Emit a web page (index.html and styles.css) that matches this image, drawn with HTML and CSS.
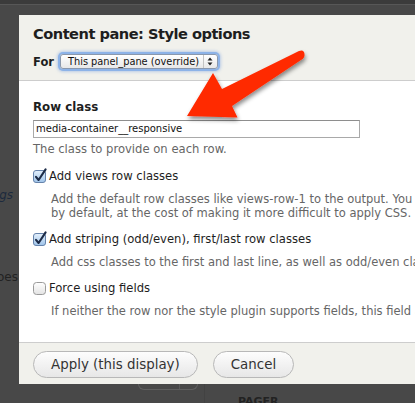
FILE: index.html
```html
<!DOCTYPE html>
<html lang="en">
<head>
<meta charset="utf-8">
<title>Content pane: Style options</title>
<link rel="stylesheet" href="styles.css">
</head>
<body>
<svg class="defs" width="0" height="0" aria-hidden="true">
  <defs>
    <linearGradient id="cbOn" x1="0" y1="0" x2="0" y2="1">
      <stop offset="0" stop-color="#e4f0fc"/>
      <stop offset="1" stop-color="#9fc4ea"/>
    </linearGradient>
    <linearGradient id="cbOff" x1="0" y1="0" x2="0" y2="1">
      <stop offset="0" stop-color="#ffffff"/>
      <stop offset="1" stop-color="#e3e3e3"/>
    </linearGradient>
    <filter id="arrowShadow" x="-20%" y="-20%" width="150%" height="160%">
      <feDropShadow dx="1" dy="3" stdDeviation="2" flood-color="#000" flood-opacity="0.45"/>
    </filter>
  </defs>
</svg>

<div class="page">
  <div class="topbar"></div>
  <div class="page-main">
    <div class="side">
      <div class="side-link">Settings</div>
      <div class="side-text">Does</div>
    </div>
    <div class="page-bottom">
      <div class="btn-group"><span class="btn-group-part"></span></div>
      <div class="col-line"></div>
      <div class="pager">PAGER</div>
    </div>
  </div>
</div>

<div class="dialog">
  <div class="dlg-head">
    <h1 class="title">Content pane: Style options</h1>
    <div class="for-row">
      <span class="for-label">For</span>
      <div class="select">
        <span class="select-text">This panel_pane (override)</span>
        <span class="select-arrows">
          <svg width="6" height="9" viewBox="0 0 6 9"><path d="M0.5 3.6 L3 0.6 L5.5 3.6 Z M0.5 5.4 L3 8.4 L5.5 5.4 Z" fill="#222"/></svg>
        </span>
      </div>
    </div>
  </div>

  <div class="dlg-body">
    <div class="field-label">Row class</div>
    <div class="text-input">media-container__responsive</div>
    <div class="help">The class to provide on each row.</div>

    <div class="cb-row">
      <svg class="cb" width="13" height="13" viewBox="0 0 13 13"><rect x="0.5" y="0.5" width="12" height="12" rx="2.5" fill="url(#cbOn)" stroke="#6683ab"/><path d="M3 6.8 L5.6 10 L12.6 -0.6" fill="none" stroke="#1c2b47" stroke-width="2.1" stroke-linecap="round" stroke-linejoin="round"/></svg>
      <span class="cb-label">Add views row classes</span>
    </div>
    <div class="desc">Add the default row classes like views-row-1 to the output. You can use this to quickly reduce the amount of markup the view provides<br>by default, at the cost of making it more difficult to apply CSS.</div>

    <div class="cb-row">
      <svg class="cb" width="13" height="13" viewBox="0 0 13 13"><rect x="0.5" y="0.5" width="12" height="12" rx="2.5" fill="url(#cbOn)" stroke="#6683ab"/><path d="M3 6.8 L5.6 10 L12.6 -0.6" fill="none" stroke="#1c2b47" stroke-width="2.1" stroke-linecap="round" stroke-linejoin="round"/></svg>
      <span class="cb-label">Add striping (odd/even), first/last row classes</span>
    </div>
    <div class="desc">Add css classes to the first and last line, as well as odd/even classes for striping.</div>

    <div class="cb-row">
      <svg class="cb" width="13" height="13" viewBox="0 0 13 13"><rect x="0.5" y="0.5" width="12" height="12" rx="3" fill="url(#cbOff)" stroke="#9a9a9a"/></svg>
      <span class="cb-label">Force using fields</span>
    </div>
    <div class="desc">If neither the row nor the style plugin supports fields, this field allows to enable them, so you can for example use groupby.</div>
  </div>

  <div class="dlg-foot">
    <button class="btn" type="button">Apply (this display)</button>
    <button class="btn" type="button">Cancel</button>
  </div>
</div>

<svg class="annot-arrow" width="415" height="403" viewBox="0 0 415 403" aria-hidden="true">
  <path d="M187 116 L213 73 L222 89 L299 51 Q304 49 304.5 54 Q305 58 301 60 L232 106 L237.5 117.5 Z" fill="#ff2a00" filter="url(#arrowShadow)"/>
</svg>
</body>
</html>
```

FILE: styles.css
```css
html, body {
  margin: 0;
  padding: 0;
  width: 415px;
  height: 403px;
  overflow: hidden;
}

body {
  position: relative;
  background: #484848;
  font-family: "DejaVu Sans", "Liberation Sans", sans-serif;
  color: #222;
}

.defs {
  position: absolute;
  width: 0;
  height: 0;
}

/* ---------- dimmed page underneath ---------- */
.page {
  display: flex;
  flex-direction: column;
  width: 415px;
  height: 403px;
}

.topbar {
  height: 4px;
  background: #3b3b3b;
  border-bottom: 1px solid #575757;
}

.page-main {
  flex: 1;
  display: flex;
  flex-direction: column;
  background: #484848;
}

.side {
  width: 19px;
  height: 379px;
  overflow: hidden;
}

.side-link,
.side-text {
  display: flex;
  justify-content: flex-end;
  white-space: nowrap;
  font-size: 12px;
  line-height: 15px;
}

.side-link {
  margin-top: 183px;
  padding-right: 6px;
  font-style: italic;
  color: #1c2a3d;
}

.side-text {
  margin-top: 67px;
  padding-right: 1px;
  color: #222;
}

.page-bottom {
  display: flex;
  align-items: flex-start;
  height: 19px;
  padding-left: 138px;
}

.btn-group {
  width: 60px;
  height: 6px;
  box-sizing: border-box;
  border: 1px solid #5f5f5f;
  border-top: none;
  border-radius: 0 0 7px 7px;
  display: flex;
  justify-content: flex-end;
}

.btn-group-part {
  width: 17px;
  border-left: 1px solid #5a5a5a;
}

.col-line {
  width: 1px;
  height: 19px;
  margin-left: 6px;
  background: #424242;
}

.pager {
  margin-left: 33px;
  margin-top: 11px;
  font-size: 11px;
  font-weight: bold;
  line-height: 13px;
  color: #222;
}

/* ---------- modal dialog ---------- */
.dialog {
  position: absolute;
  left: 19px;
  top: 15px;
  width: 640px;
  background: #fff;
}

.dlg-head {
  background: #f1f1ec;
  padding: 10px 14px 9px;
  border-bottom: 1px solid #cdcdcd;
}

.title {
  margin: 0;
  font-size: 14.6px;
  font-weight: bold;
  line-height: 18px;
  letter-spacing: -0.5px;
  color: #1e1e1e;
}

.for-row {
  display: flex;
  align-items: center;
  gap: 6px;
  height: 19px;
  margin-top: 9px;
}

.for-label {
  font-size: 11.5px;
  font-weight: bold;
  color: #1e1e1e;
}

.select {
  display: flex;
  align-items: center;
  width: 158px;
  height: 15px;
  box-sizing: border-box;
  border: 1px solid #8a98ad;
  border-radius: 3px;
  background: linear-gradient(#ffffff, #e8e8e8);
  box-shadow: 0 0 0 2px #8db3e8, 0 0 3px 3px rgba(120, 160, 225, 0.45);
  font-size: 9.8px;
  color: #111;
}

.select-text {
  flex: 1;
  padding-left: 7px;
  white-space: nowrap;
}

.select-arrows {
  width: 13px;
  height: 100%;
  border-left: 1px solid #c4c4c4;
  display: flex;
  align-items: center;
  justify-content: center;
}

.dlg-body {
  padding: 19px 14px 24px;
}

.field-label {
  font-size: 11.8px;
  font-weight: bold;
  line-height: 15px;
  color: #1e1e1e;
}

.text-input {
  margin-top: 5px;
  width: 327px;
  height: 18px;
  box-sizing: border-box;
  border: 1px solid #a9a9a9;
  border-top-color: #8e8e8e;
  padding: 0 2px;
  font-size: 10px;
  line-height: 16px;
  color: #111;
  white-space: nowrap;
}

.help {
  margin-top: 4px;
  font-size: 11.6px;
  line-height: 15px;
  color: #666;
}

.cb-row {
  display: flex;
  align-items: center;
  gap: 3px;
  margin-top: 12px;
  font-size: 11.6px;
  line-height: 15px;
  color: #1e1e1e;
}

.cb {
  flex: none;
  overflow: visible;
}

.desc {
  margin: 8px 0 0 18px;
  font-size: 11.5px;
  line-height: 14px;
  color: #666;
  white-space: nowrap;
}

.dlg-foot {
  display: flex;
  gap: 15px;
  background: #f1f1ec;
  border-top: 1px solid #cdcdcd;
  padding: 8px 14px 6px;
}

.btn {
  height: 27px;
  box-sizing: border-box;
  border: 1px solid #b8b8b8;
  border-radius: 14px;
  background: linear-gradient(#fdfdfd, #e7e7e7);
  padding: 0 17px;
  font-family: "DejaVu Sans", "Liberation Sans", sans-serif;
  font-size: 13.4px;
  color: #333;
  display: flex;
  align-items: center;
}

/* ---------- annotation arrow over everything ---------- */
.annot-arrow {
  position: absolute;
  left: 0;
  top: 0;
  pointer-events: none;
}
```
